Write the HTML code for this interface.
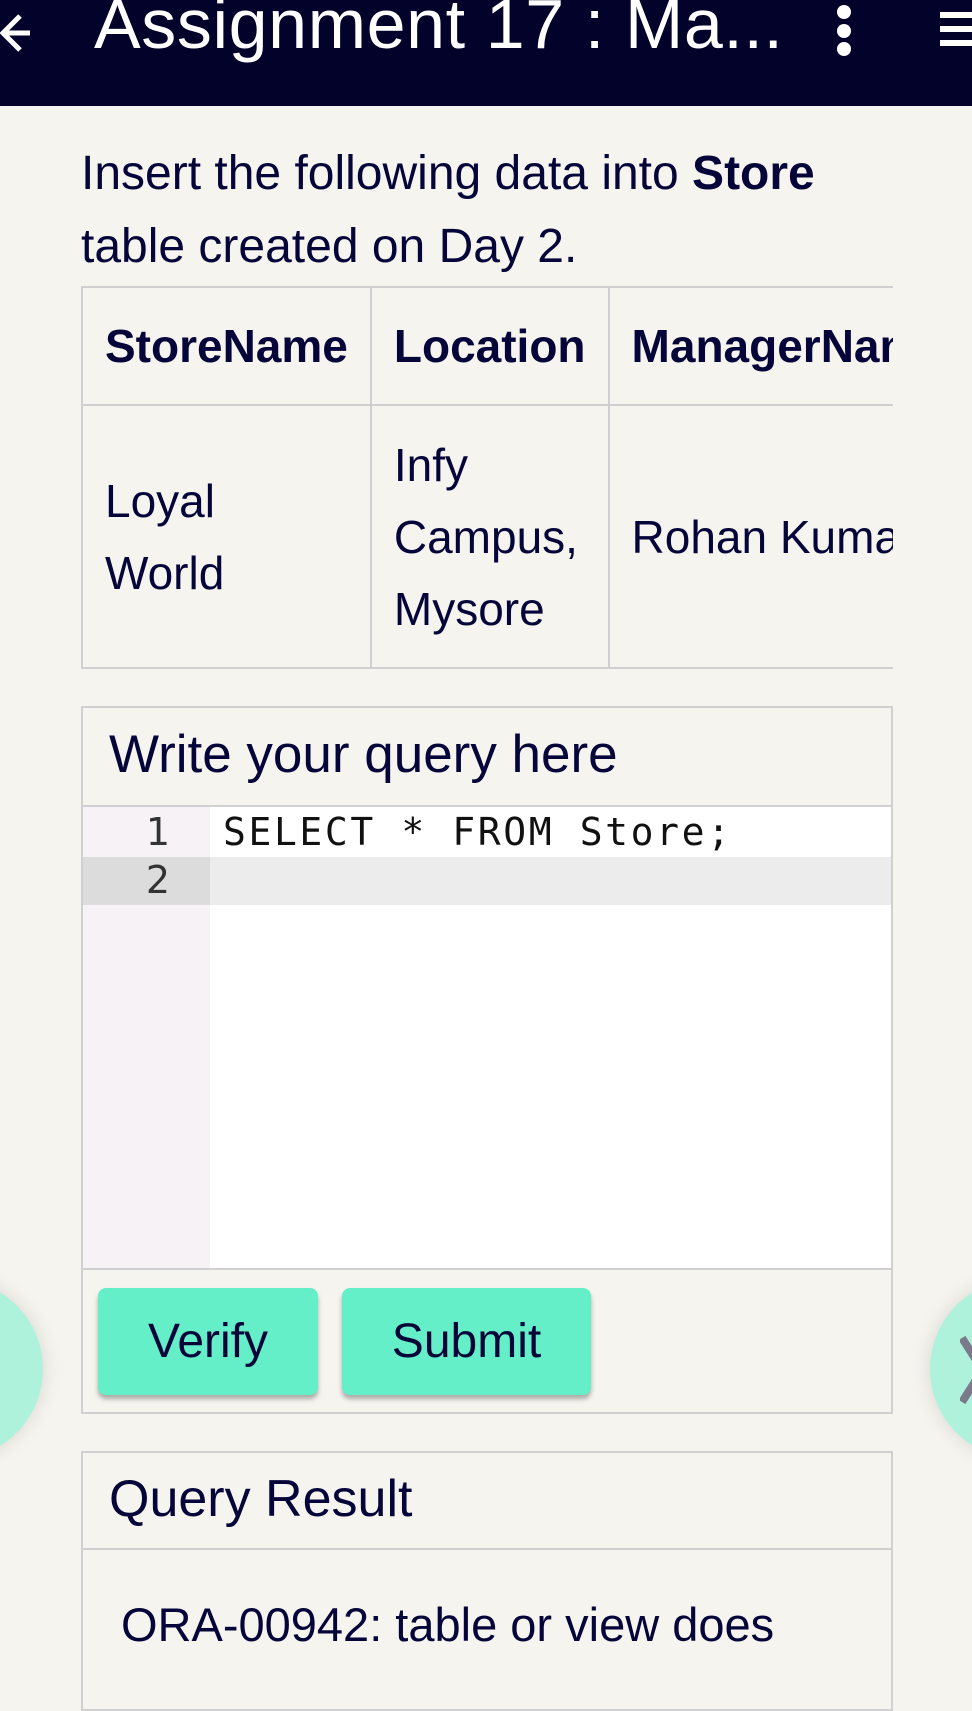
<!DOCTYPE html>
<html><head><meta charset="utf-8"><style>
*{margin:0;padding:0;box-sizing:border-box}
body{width:972px;height:1673px;overflow:hidden;background:#f5f4ef;font-family:"Liberation Sans",sans-serif;color:#05053a;position:relative}
.hdr{position:absolute;left:0;top:0;width:972px;height:106px;background:#02022a}
.title{position:absolute;left:94px;top:-11px;font-size:70px;line-height:70px;color:#fff;letter-spacing:0.6px;white-space:nowrap}
.abs{position:absolute}
.p{position:absolute;left:81px;font-size:48px;white-space:nowrap}
table{position:absolute;left:81px;top:286px;border-collapse:collapse;font-size:46px}
td{border:2px solid #d0d0d0;padding:0 22px;vertical-align:middle;line-height:72px;white-space:nowrap;overflow:hidden}
.clip{position:absolute;left:0;top:0;width:893px;height:700px;overflow:hidden}
.box{position:absolute;left:81px;width:812px;border:2px solid #d0d0d0}
.btn{position:absolute;top:1288px;height:107px;background:#65efc8;border-radius:8px;box-shadow:0 4px 5px rgba(0,0,0,.3);font-size:48px;text-align:center;line-height:107px}
.circ{position:absolute;width:180px;height:180px;border-radius:50%;background:#aef2dc;box-shadow:0 0 20px rgba(0,0,0,.12)}
</style></head><body>
<div class="circ" style="left:-137px;top:1279px"></div>
<div class="circ" style="left:930px;top:1279px"></div>
<svg class="abs" style="left:960px;top:1330px" width="12" height="80"><path d="M2 8L16 30M16 50L2 72" stroke="#7a7a8a" stroke-width="8" fill="none"/></svg>
<div class="hdr">
<svg class="abs" style="left:0;top:8px" width="40" height="50"><path d="M30 25H3M20 8L3 25L20 42" stroke="#fff" stroke-width="5" fill="none"/></svg>
<div class="title">Assignment 17 : Ma...</div>
<div class="abs" style="left:837px;top:5px;width:14px;height:14px;border-radius:50%;background:#fff"></div>
<div class="abs" style="left:837px;top:24px;width:14px;height:14px;border-radius:50%;background:#fff"></div>
<div class="abs" style="left:837px;top:42px;width:14px;height:14px;border-radius:50%;background:#fff"></div>
<div class="abs" style="left:940px;top:12px;width:32px;height:6px;background:#fff"></div>
<div class="abs" style="left:940px;top:26px;width:32px;height:6px;background:#fff"></div>
<div class="abs" style="left:940px;top:40px;width:32px;height:6px;background:#fff"></div>
</div>
<div class="p" style="top:146px">Insert the following data into <b>Store</b></div>
<div class="p" style="top:219px">table created on Day 2.</div>
<div class="clip">
<table>
<tr style="height:118px"><td style="width:290px"><b>StoreName</b></td><td style="width:230px"><b>Location</b></td><td style="width:300px"><b>ManagerName</b></td></tr>
<tr style="height:263px"><td>Loyal<br>World</td><td>Infy<br>Campus,<br>Mysore</td><td>Rohan Kumar</td></tr>
</table>
</div>
<div class="box" style="top:706px;height:708px"></div>
<div class="p" style="left:109px;top:724px;font-size:53px">Write your query here</div>
<div class="abs" style="left:83px;top:805px;width:808px;height:2px;background:#d0d0d0"></div>
<div class="abs" style="left:83px;top:807px;width:808px;height:462px;background:#fff"></div>
<div class="abs" style="left:83px;top:807px;width:127px;height:462px;background:#f6f2f5"></div>
<div class="abs" style="left:83px;top:857px;width:127px;height:48px;background:#dcdcdc"></div>
<div class="abs" style="left:210px;top:857px;width:681px;height:48px;background:#ececec"></div>
<div class="abs" style="left:83px;top:1268px;width:808px;height:2px;background:#d0d0d0"></div>
<div class="abs" style="font-family:'DejaVu Sans Mono','Liberation Mono',monospace;font-size:38px;letter-spacing:2.6px;color:#111;left:223px;top:808px;line-height:48px;white-space:nowrap">SELECT * FROM Store;</div>
<div class="abs" style="font-family:'DejaVu Sans',sans-serif;font-size:38px;color:#333;left:130px;width:40px;text-align:right;top:808px;line-height:48px">1<br>2</div>
<div class="btn" style="left:98px;width:220px">Verify</div>
<div class="btn" style="left:342px;width:249px">Submit</div>
<div class="box" style="top:1451px;height:260px"></div>
<div class="abs" style="left:83px;top:1548px;width:808px;height:2px;background:#d0d0d0"></div>
<div class="p" style="left:109px;top:1469px;font-size:52px">Query Result</div>
<div class="p" style="left:121px;top:1597px;font-size:47px">ORA-00942: table or view does</div>
</body></html>
